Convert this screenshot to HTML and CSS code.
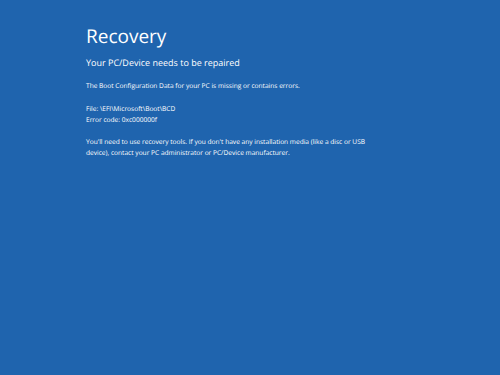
FILE: index.html
```html
<!DOCTYPE html>
<html lang="en">
  <head>
    <meta charset="UTF-8" />
    <title>Recovery</title>
    <link rel="stylesheet" href="styles.css">
  </head>
  <body>
    <section class="recovery">
      <h1>Recovery</h1>
      <h2>Your PC/Device needs to be repaired</h2>

      <p>The Boot Configuration Data for your PC is missing or contains errors.</p>

      <p>
        File: \EFI\Microsoft\Boot\BCD<br />
        Error code: 0xc000000f
      </p>

      <p>
        You'll need to use recovery tools. If you don't have any installation media (like a disc or USB
        device), contact your PC administrator or PC/Device manufacturer.
      </p>
    </section>
  </body>
</html>
```

FILE: styles.css
```css
html,
body {
  margin: 0;
  height: 100%;
}

body {
  background-color: #1f64ae; /* recovery blue */
  color: #ffffff;
  font-family: "Open Sans", "Noto Sans", sans-serif;
  text-rendering: geometricPrecision;
}

.recovery {
  padding: 22px 0 0 86px;
  max-width: 290px;
}

.recovery h1 {
  font-size: 19px;
  font-weight: normal;
  line-height: 28px;
  margin: 0 0 6px;
}

.recovery h2 {
  font-size: 9px;
  font-weight: normal;
  line-height: 14px;
  margin: 0 0 10px;
}

.recovery p {
  font-size: 6.6px;
  line-height: 11px;
  margin: 0 0 11.5px;
}
```
